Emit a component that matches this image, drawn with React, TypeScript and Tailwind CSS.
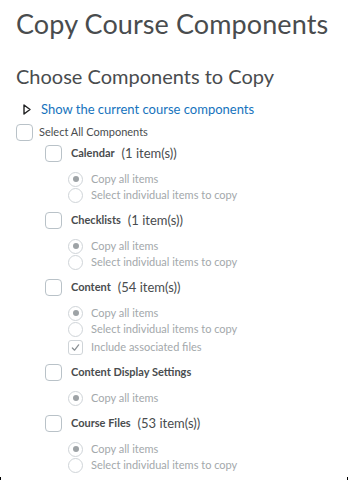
import React from 'react';

interface Option {
	label: string;
	kind: 'radio' | 'check';
	selected?: boolean;
}

interface Component {
	name: string;
	count?: string;
	options: Option[];
}

const both: Option[] = [
	{ label: 'Copy all items', kind: 'radio', selected: true },
	{ label: 'Select individual items to copy', kind: 'radio' },
];

const components: Component[] = [
	{ name: 'Calendar', count: '(1 item(s))', options: both },
	{ name: 'Checklists', count: '(1 item(s))', options: both },
	{
		name: 'Content',
		count: '(54 item(s))',
		options: [...both, { label: 'Include associated files', kind: 'check', selected: true }],
	},
	{ name: 'Content Display Settings', options: [{ label: 'Copy all items', kind: 'radio', selected: true }] },
	{ name: 'Course Files', count: '(53 item(s))', options: both },
];

const Box = () => <span className="block h-[17px] w-[17px] shrink-0 rounded-[4px] border border-[#b9c2c8] bg-white" />;

const Radio = ({ selected }: { selected?: boolean }) => (
	<span className="flex h-[15px] w-[15px] shrink-0 items-center justify-center rounded-full border border-[#cfd4d8] bg-white">
		{selected && <span className="block h-[6px] w-[6px] rounded-full bg-[#9ea3a6]" />}
	</span>
);

const Tick = () => (
	<span className="flex h-[15px] w-[15px] shrink-0 items-center justify-center rounded-[3px] border border-[#cfd4d8] bg-white">
		<svg width="9" height="9" viewBox="0 0 10 10" fill="none">
			<path d="M1.5 5.5 L4 8 L8.5 2" stroke="#8a9094" strokeWidth="1.4" strokeLinecap="round" strokeLinejoin="round" />
		</svg>
	</span>
);

export default function App() {
	return (
		<div className="relative h-[480px] w-[348px] overflow-hidden bg-white font-['Lato',sans-serif] text-[#494c4e]">
			<h1 className="pl-[16px] pt-[7px] text-[27px] leading-[34px] tracking-[0.1px]">Copy Course Components</h1>
			<h2 className="mt-[23px] pl-[16px] text-[20px] leading-[24px]">Choose Components to Copy</h2>

			<div className="mt-[12px] flex items-center pl-[23px]">
				<svg width="8" height="11" viewBox="0 0 8 11" fill="none">
					<path d="M1 1 L7 5.5 L1 10 Z" stroke="#202122" strokeWidth="1.4" strokeLinejoin="round" />
				</svg>
				<span className="ml-[10px] text-[13px] leading-[18px] text-[#1673bd]">Show the current course components</span>
			</div>

			<div className="mt-[5px] flex h-[18px] items-center pl-[16px]">
				<Box />
				<span className="ml-[6px] text-[11px] leading-[18px]">Select All Components</span>
			</div>

			<div className="pl-[45px]">
				{components.map((c, i) => (
					<div key={c.name} className={i === 0 ? 'mt-[3px]' : 'mt-[9px]'}>
						<div className="flex h-[18px] items-center">
							<Box />
							<span className="ml-[9px] text-[11px] font-bold leading-[18px]">{c.name}</span>
							{c.count && <span className="ml-[7px] text-[13px] leading-[18px]">{c.count}</span>}
						</div>
						<div className="mt-[10px] flex flex-col gap-[2px] pl-[23px]">
							{c.options.map((o) => (
								<div key={o.label} className={o.kind === 'check' ? 'mt-[2px] flex h-[14px] items-center' : 'flex h-[14px] items-center'}>
									{o.kind === 'radio' ? <Radio selected={o.selected} /> : <Tick />}
									<span className="ml-[8px] text-[11px] leading-[14px] text-[#a3a8ab]">{o.label}</span>
								</div>
							))}
						</div>
					</div>
				))}
			</div>

			<span className="absolute bottom-0 left-0 h-[3px] w-[1px] bg-black" />
			<span className="absolute bottom-0 right-0 h-[3px] w-[1px] bg-black" />
		</div>
	);
}
